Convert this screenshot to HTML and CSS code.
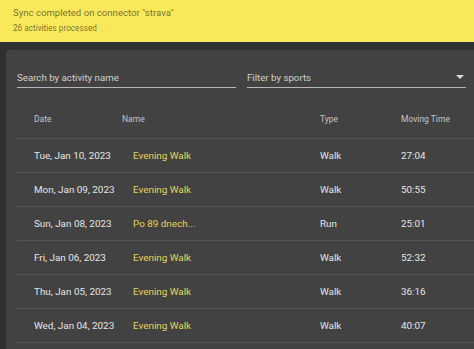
FILE: index.html
```html
<!DOCTYPE html>
<html lang="en">
<head>
  <meta charset="UTF-8">
  <title>Activities</title>
  <link rel="stylesheet" href="styles.css">
</head>
<body>
  <div class="banner">
    <div class="banner-title">Sync completed on connector "strava"</div>
    <div class="banner-sub">26 activities processed</div>
  </div>

  <div class="page">
    <div class="card">
      <div class="filters">
        <div class="field">
          <span class="placeholder">Search by activity name</span>
        </div>
        <div class="field select">
          <span class="placeholder">Filter by sports</span>
          <span class="arrow"></span>
        </div>
      </div>

      <table class="activities">
        <colgroup>
          <col class="c-date">
          <col class="c-name">
          <col class="c-type">
          <col class="c-time">
        </colgroup>
        <thead>
          <tr>
            <th>Date</th>
            <th>Name</th>
            <th>Type</th>
            <th>Moving Time</th>
          </tr>
        </thead>
        <tbody>
          <tr>
            <td>Tue, Jan 10, 2023</td>
            <td><a class="link">Evening Walk</a></td>
            <td>Walk</td>
            <td>27:04</td>
          </tr>
          <tr>
            <td>Mon, Jan 09, 2023</td>
            <td><a class="link">Evening Walk</a></td>
            <td>Walk</td>
            <td>50:55</td>
          </tr>
          <tr>
            <td>Sun, Jan 08, 2023</td>
            <td><a class="link">Po 89 dnech...</a></td>
            <td>Run</td>
            <td>25:01</td>
          </tr>
          <tr>
            <td>Fri, Jan 06, 2023</td>
            <td><a class="link">Evening Walk</a></td>
            <td>Walk</td>
            <td>52:32</td>
          </tr>
          <tr>
            <td>Thu, Jan 05, 2023</td>
            <td><a class="link">Evening Walk</a></td>
            <td>Walk</td>
            <td>36:16</td>
          </tr>
          <tr>
            <td>Wed, Jan 04, 2023</td>
            <td><a class="link">Evening Walk</a></td>
            <td>Walk</td>
            <td>40:07</td>
          </tr>
        </tbody>
      </table>
    </div>
  </div>
</body>
</html>
```

FILE: styles.css
```css
body {
  margin: 0;
  font-family: Roboto, "Liberation Sans", sans-serif;
  background: #303030;
  color: #e8e8e8;
  height: 349px;
  overflow: hidden;
}
.banner {
  background: #f9e85a;
  color: rgba(0,0,0,0.55);
  height: 42px;
  box-sizing: border-box;
  padding: 5px 13px 0;
}
.banner-title {
  font-size: 9.6px;
  line-height: 15px;
}
.banner-sub {
  font-size: 8.2px;
  line-height: 16px;
}
.page {
  padding: 8px 0 0 6px;
}
.card {
  background: #424242;
  border-radius: 4px 0 0 0;
  padding: 0 0 0 11px;
  min-height: 400px;
}
.filters {
  display: grid;
  grid-template-columns: 1fr 1fr;
  gap: 11px;
  padding: 17px 8px 0 0;
}
.field {
  display: flex;
  align-items: center;
  height: 20px;
  border-bottom: 1px solid #b5b5b5;
}
.placeholder {
  font-size: 9.7px;
  color: #d0d0d0;
}
.select {
  justify-content: space-between;
}
.arrow {
  width: 0;
  height: 0;
  border-left: 4px solid transparent;
  border-right: 4px solid transparent;
  border-top: 4px solid #d8d8d8;
  margin-right: 2px;
}
.activities {
  width: 100%;
  table-layout: fixed;
  border-collapse: collapse;
  margin-top: 11px;
}
.c-date { width: 88px; }
.c-name { width: 198px; }
.c-type { width: 81px; }
.activities th {
  text-align: left;
  font-weight: normal;
  font-size: 8.5px;
  color: #c4c4c4;
  height: 39px;
  padding: 0 0 0 17px;
  border-bottom: 1px solid #555;
}
.activities td {
  font-size: 9.9px;
  height: 33px;
  padding: 0 0 0 17px;
  border-bottom: 1px solid #555;
  white-space: nowrap;
  color: #e6e6e6;
}
.link {
  color: #e4d55a;
  padding-left: 11px;
}
```
